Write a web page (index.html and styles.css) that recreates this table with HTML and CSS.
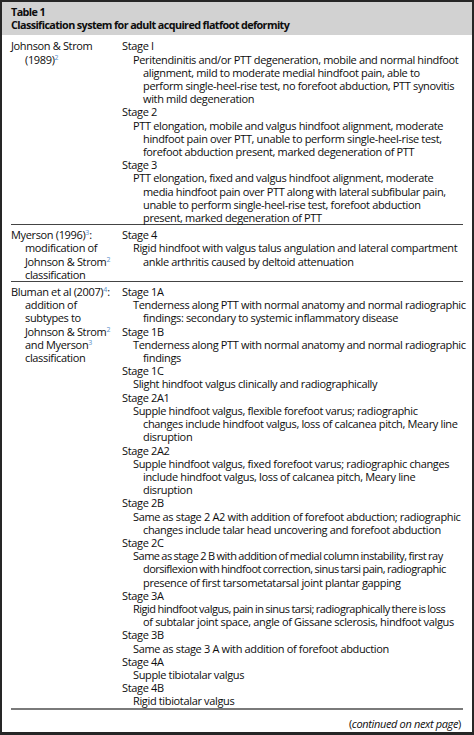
FILE: index.html
```html
<!DOCTYPE html>
<html>
<head>
<meta charset="utf-8">
<link rel="stylesheet" href="styles.css">
</head>
<body>
<div class="frame">
  <div class="head">
    <div>Table 1</div>
    <div>Classification system for adult acquired flatfoot deformity</div>
  </div>
  <div class="body">
    <div class="row">
      <div class="src">Johnson &amp; Strom<br>(1989)<sup>2</sup></div>
      <div class="stages">
        <div class="stage">Stage I</div>
        <div class="desc">Peritendinitis and/or PTT degeneration, mobile and normal hindfoot<br>alignment, mild to moderate medial hindfoot pain, able to<br>perform single-heel-rise test, no forefoot abduction, PTT synovitis<br>with mild degeneration</div>
        <div class="stage">Stage 2</div>
        <div class="desc">PTT elongation, mobile and valgus hindfoot alignment, moderate<br>hindfoot pain over PTT, unable to perform single-heel-rise test,<br>forefoot abduction present, marked degeneration of PTT</div>
        <div class="stage">Stage 3</div>
        <div class="desc">PTT elongation, fixed and valgus hindfoot alignment, moderate<br>media hindfoot pain over PTT along with lateral subfibular pain,<br>unable to perform single-heel-rise test, forefoot abduction<br>present, marked degeneration of PTT</div>
      </div>
    </div>
    <div class="row">
      <div class="src">Myerson (1996)<sup>3</sup>:<br>modification of<br>Johnson &amp; Strom<sup>2</sup><br>classification</div>
      <div class="stages">
        <div class="stage">Stage 4</div>
        <div class="desc">Rigid hindfoot with valgus talus angulation and lateral compartment<br>ankle arthritis caused by deltoid attenuation</div>
      </div>
    </div>
    <div class="row last">
      <div class="src">Bluman et al (2007)<sup>4</sup>:<br>addition of<br>subtypes to<br>Johnson &amp; Strom<sup>2</sup><br>and Myerson<sup>3</sup><br>classification</div>
      <div class="stages">
        <div class="stage">Stage 1A</div>
        <div class="desc">Tenderness along PTT with normal anatomy and normal radiographic<br>findings: secondary to systemic inflammatory disease</div>
        <div class="stage">Stage 1B</div>
        <div class="desc">Tenderness along PTT with normal anatomy and normal radiographic<br>findings</div>
        <div class="stage">Stage 1C</div>
        <div class="desc">Slight hindfoot valgus clinically and radiographically</div>
        <div class="stage">Stage 2A1</div>
        <div class="desc">Supple hindfoot valgus, flexible forefoot varus; radiographic<br>changes include hindfoot valgus, loss of calcanea pitch, Meary line<br>disruption</div>
        <div class="stage">Stage 2A2</div>
        <div class="desc">Supple hindfoot valgus, fixed forefoot varus; radiographic changes<br>include hindfoot valgus, loss of calcanea pitch, Meary line<br>disruption</div>
        <div class="stage">Stage 2B</div>
        <div class="desc">Same as stage 2 A2 with addition of forefoot abduction; radiographic<br>changes include talar head uncovering and forefoot abduction</div>
        <div class="stage">Stage 2C</div>
        <div class="desc"><span class="t">Same as stage 2 B with addition of medial column instability, first ray</span><br><span class="t">dorsiflexion with hindfoot correction, sinus tarsi pain, radiographic</span><br>presence of first tarsometatarsal joint plantar gapping</div>
        <div class="stage">Stage 3A</div>
        <div class="desc"><span class="t">Rigid hindfoot valgus, pain in sinus tarsi; radiographically there is loss</span><br>of subtalar joint space, angle of Gissane sclerosis, hindfoot valgus</div>
        <div class="stage">Stage 3B</div>
        <div class="desc">Same as stage 3 A with addition of forefoot abduction</div>
        <div class="stage">Stage 4A</div>
        <div class="desc">Supple tibiotalar valgus</div>
        <div class="stage">Stage 4B</div>
        <div class="desc">Rigid tibiotalar valgus</div>
      </div>
    </div>
    <div class="cont">(<i>continued on next page</i>)</div>
  </div>
</div>
</body>
</html>
```

FILE: styles.css
```css
html, body {
  margin: 0;
  padding: 0;
  background: #ffffff;
}
.frame {
  box-sizing: border-box;
  width: 474px;
  height: 735px;
  border: 2px solid #262626;
  border-bottom-width: 3px;
  font-family: "Open Sans", "Noto Sans", sans-serif;
  font-size: 11px;
  line-height: 13.2px;
  letter-spacing: -0.35px;
  color: #0d0d0d;
  overflow: hidden;
}
.head {
  background: #d2d2d2;
  font-weight: bold;
  font-size: 10.8px;
  letter-spacing: -0.6px;
  padding: 3px 9px 4px;
}
.body {
  padding: 4px 9px 0 9px;
}
.row {
  display: grid;
  grid-template-columns: 111px 1fr;
  border-bottom: 1px solid #444;
  white-space: nowrap;
}
.row + .row {
  padding-top: 3px;
}
.row.last {
  border-bottom: 2px solid #7a7a7a;
  padding-bottom: 0;
}
.src {
  padding-left: 14px;
  text-indent: -14px;
}
.desc {
  padding-left: 21px;
  text-indent: -10px;
}
.t {
  letter-spacing: -0.5px;
  word-spacing: -0.5px;
}
sup {
  font-size: 7px;
  line-height: 0;
  color: #5b8fc7;
  vertical-align: 4px;
  letter-spacing: 0;
}
.cont {
  text-align: right;
  padding: 7px 2px 0 0;
}
```
